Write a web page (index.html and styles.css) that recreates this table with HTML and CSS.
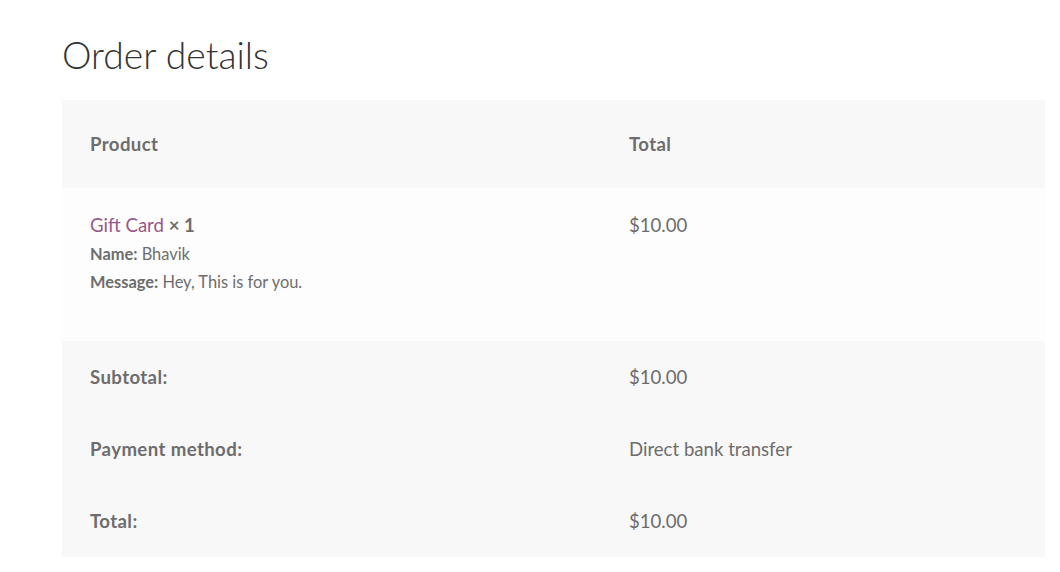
FILE: index.html
```html
<!DOCTYPE html>
<html>
<head>
<meta charset="utf-8">
<link rel="stylesheet" href="styles.css">
</head>
<body>
<section class="order">
  <h2 class="order-title">Order details</h2>
  <table class="order-table">
    <thead>
      <tr>
        <th class="col-product">Product</th>
        <th class="col-total">Total</th>
      </tr>
    </thead>
    <tbody>
      <tr class="item-row">
        <td class="cell item-cell">
          <div class="item-name"><a href="#" class="item-link">Gift Card</a> <strong class="qty">× 1</strong></div>
          <ul class="meta">
            <li><strong>Name:</strong> Bhavik</li>
            <li><strong>Message:</strong> Hey, This is for you.</li>
          </ul>
        </td>
        <td class="cell item-cell">$10.00</td>
      </tr>
    </tbody>
    <tfoot>
      <tr>
        <th class="foot-label">Subtotal:</th>
        <td class="foot-value">$10.00</td>
      </tr>
      <tr>
        <th class="foot-label">Payment method:</th>
        <td class="foot-value">Direct bank transfer</td>
      </tr>
      <tr>
        <th class="foot-label">Total:</th>
        <td class="foot-value">$10.00</td>
      </tr>
    </tfoot>
  </table>
</section>
</body>
</html>
```
FILE: styles.css
```css
html, body {
  margin: 0;
  padding: 0;
  background: #ffffff;
}
body {
  font-family: Lato, "Open Sans", sans-serif;
  color: #6d6d6d;
  font-size: 18.6px;
}
.order {
  padding: 0 15px 0 62px;
}
.order-title {
  margin: 0;
  padding-top: 33px;
  height: 100px;
  box-sizing: border-box;
  font-size: 37.3px;
  line-height: 1.2;
  font-weight: 300;
  color: #333333;
}
.order-table {
  width: 983px;
  border-collapse: collapse;
  border-spacing: 0;
}
.order-table th {
  text-align: left;
  font-weight: 700;
  letter-spacing: 0.4px;
}
thead th {
  background: #f8f8f8;
  height: 88px;
  padding: 0 28px;
  box-sizing: border-box;
  vertical-align: middle;
}
.col-product {
  width: 539px;
}
.item-row td {
  background: #fdfdfd;
  vertical-align: top;
  padding: 23px 28px 0;
  height: 153px;
  box-sizing: border-box;
  line-height: 29px;
}
.item-link {
  color: #96588a;
  text-decoration: none;
}
.qty {
  font-weight: 700;
}
.meta {
  list-style: none;
  margin: 0;
  padding: 0;
  font-size: 16.4px;
  line-height: 28px;
}
.meta strong {
  font-weight: 700;
}
tfoot th, tfoot td {
  background: #f8f8f8;
  height: 72px;
  padding: 0 28px;
  box-sizing: border-box;
  vertical-align: middle;
}
```
